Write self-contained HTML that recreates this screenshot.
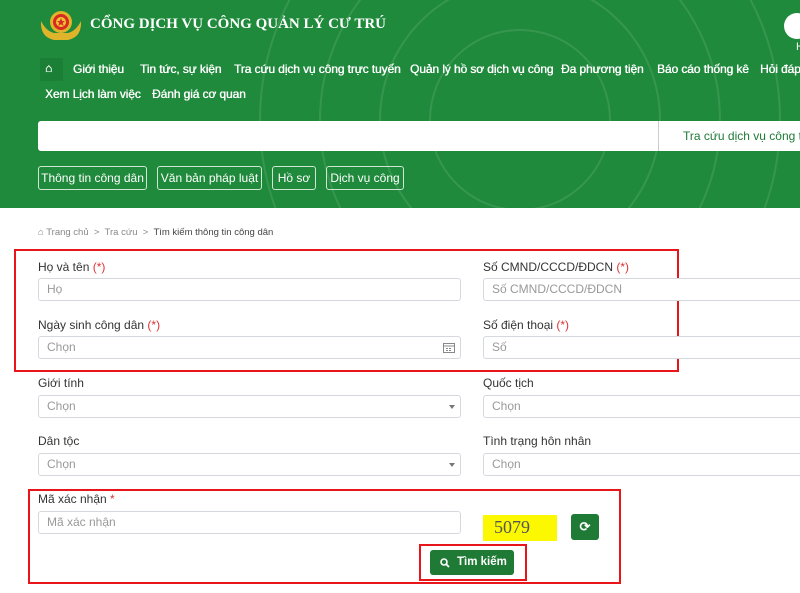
<!DOCTYPE html>
<html><head><meta charset="utf-8"><style>
*{box-sizing:border-box;margin:0;padding:0}
body{width:800px;height:593px;overflow:hidden;background:#fff;font-family:"Liberation Sans",sans-serif;position:relative}
.hdr{position:absolute;left:0;top:0;width:800px;height:208px;background:#1f8a3b;overflow:hidden}
.a{position:absolute;white-space:nowrap}
.nav{color:#fff;font-size:12px;letter-spacing:-0.1px;text-shadow:0 0 0.4px #fff,0.3px 0 0 #fff}
.btn{position:absolute;top:166px;height:24px;border:1px solid #cfe6d3;border-radius:3px;color:#fff;font-size:12px;line-height:22px;text-align:center}
.lbl{font-size:12px;color:#333}
.lbl b{color:#d33;font-weight:normal}
.inp{position:absolute;height:23px;border:1px solid #d5d9de;border-radius:3px;font-size:12px;color:#999;padding-left:8px;line-height:21px;background:#fff}
.caret{position:absolute;right:5px;top:9px;border-left:3px solid transparent;border-right:3px solid transparent;border-top:4px solid #777}
.red{position:absolute;border:2px solid #e8161b}
</style></head><body>
<div class="hdr">
<svg width="800" height="208" style="position:absolute;left:0;top:0;opacity:.1">
<g fill="none" stroke="#fff" stroke-width="2">
<circle cx="520" cy="120" r="140"/><circle cx="520" cy="120" r="200"/><circle cx="520" cy="120" r="260"/><circle cx="520" cy="120" r="90"/>
</g></svg>
<svg class="a" style="left:38px;top:7px" width="46" height="36" viewBox="0 0 46 36">
<path d="M3 14 Q2 30 16 33 L30 33 Q44 30 43 14 Q38 24 30 26 L16 26 Q8 24 3 14Z" fill="#e0b42a"/>
<circle cx="23" cy="15" r="11" fill="#e0b42a"/>
<circle cx="23" cy="15" r="8" fill="#d62b23"/><circle cx="23" cy="15" r="5" fill="#f1c232"/>
<polygon points="23,11 24.2,14 27,14 24.8,15.8 25.6,19 23,17.2 20.4,19 21.2,15.8 19,14 21.8,14" fill="#d62b23"/>
</svg>
<div class="a" style="left:90px;top:16px;color:#fff;font-family:'Liberation Serif',serif;font-weight:bold;font-size:15px">CỔNG DỊCH VỤ CÔNG QUẢN LÝ CƯ TRÚ</div>
<div class="a" style="left:40px;top:58px;width:23px;height:23px;background:rgba(0,0,0,.08)"></div>
<div class="a nav" style="left:45px;top:61px">⌂</div>
<div class="a nav" style="left:73px;top:62px">Giới thiệu</div>
<div class="a nav" style="left:140px;top:62px">Tin tức, sự kiện</div>
<div class="a nav" style="left:234px;top:62px">Tra cứu dịch vụ công trực tuyến</div>
<div class="a nav" style="left:410px;top:62px">Quản lý hồ sơ dịch vụ công</div>
<div class="a nav" style="left:561px;top:62px">Đa phương tiện</div>
<div class="a nav" style="left:657px;top:62px">Báo cáo thống kê</div>
<div class="a nav" style="left:760px;top:62px">Hỏi đáp</div>
<div class="a nav" style="left:45px;top:87px">Xem Lịch làm việc</div>
<div class="a nav" style="left:152px;top:87px">Đánh giá cơ quan</div>
<div class="a" style="left:784px;top:13px;width:26px;height:26px;border-radius:50%;background:#fff"></div>
<div class="a" style="left:796px;top:41px;color:#fff;font-size:11px">H</div>
<div class="a" style="left:38px;top:121px;width:770px;height:30px;background:#fff;border-radius:3px"></div>
<div class="a" style="left:658px;top:121px;width:1px;height:30px;background:#ccc"></div>
<div class="a" style="left:683px;top:129px;color:#1f7a35;font-size:12px">Tra cứu dịch vụ công trực tuyến</div>
<div class="btn" style="left:38px;width:109px">Thông tin công dân</div>
<div class="btn" style="left:157px;width:105px">Văn bản pháp luật</div>
<div class="btn" style="left:272px;width:44px">Hồ sơ</div>
<div class="btn" style="left:326px;width:78px">Dịch vụ công</div>
</div>
<div class="a" style="left:38px;top:227px;font-size:9.5px;color:#888">⌂ Trang chủ &nbsp;&gt;&nbsp; Tra cứu &nbsp;&gt;&nbsp; <span style="color:#444">Tìm kiếm thông tin công dân</span></div>
<div class="red" style="left:14px;top:249px;width:665px;height:123px"></div>
<div class="a lbl" style="left:38px;top:260px">Họ và tên <b>(*)</b></div>
<div class="inp" style="left:38px;top:278px;width:423px">Họ</div>
<div class="a lbl" style="left:483px;top:260px">Số CMND/CCCD/ĐDCN <b>(*)</b></div>
<div class="inp" style="left:483px;top:278px;width:330px">Số CMND/CCCD/ĐDCN</div>
<div class="a lbl" style="left:38px;top:318px">Ngày sinh công dân <b>(*)</b></div>
<div class="inp" style="left:38px;top:336px;width:423px">Chọn<svg style="position:absolute;right:5px;top:5px" width="12" height="11"><rect x=".5" y="1.5" width="11" height="9" fill="none" stroke="#888"/><line x1="1" y1="4" x2="11" y2="4" stroke="#888"/><g fill="#888"><rect x="3" y="6" width="2" height="1"/><rect x="6" y="6" width="2" height="1"/><rect x="3" y="8" width="2" height="1"/><rect x="6" y="8" width="2" height="1"/></g></svg></div>
<div class="a lbl" style="left:483px;top:318px">Số điện thoại <b>(*)</b></div>
<div class="inp" style="left:483px;top:336px;width:330px">Số</div>
<div class="a lbl" style="left:38px;top:376px">Giới tính</div>
<div class="inp" style="left:38px;top:395px;width:423px">Chọn<span class="caret"></span></div>
<div class="a lbl" style="left:483px;top:376px">Quốc tịch</div>
<div class="inp" style="left:483px;top:395px;width:330px">Chọn</div>
<div class="a lbl" style="left:38px;top:434px">Dân tộc</div>
<div class="inp" style="left:38px;top:453px;width:423px">Chọn<span class="caret"></span></div>
<div class="a lbl" style="left:483px;top:434px">Tình trạng hôn nhân</div>
<div class="inp" style="left:483px;top:453px;width:330px">Chọn</div>
<div class="red" style="left:28px;top:489px;width:593px;height:95px"></div>
<div class="a lbl" style="left:38px;top:492px">Mã xác nhận <b style="color:#d33">*</b></div>
<div class="inp" style="left:38px;top:511px;width:423px">Mã xác nhận</div>
<div class="a" style="left:483px;top:515px;width:74px;height:26px;background:#fbf800;color:#555;font-family:'Liberation Serif',serif;font-size:18px;line-height:24px;padding-left:11px">5079</div>
<div class="a" style="left:571px;top:514px;width:28px;height:26px;background:#1f7a35;border-radius:3px;color:#fff;font-size:13px;text-align:center;line-height:25px;font-weight:bold">⟳</div>
<div class="red" style="left:419px;top:544px;width:108px;height:37px"></div>
<div class="a" style="left:430px;top:550px;width:84px;height:25px;background:#1f7a35;border-radius:3px;color:#fff;font-size:11.5px;font-weight:bold;line-height:25px;padding-left:27px"><svg style="position:absolute;left:10px;top:8px" width="10" height="10"><circle cx="4" cy="4" r="3" fill="none" stroke="#fff" stroke-width="1.6"/><line x1="6.2" y1="6.2" x2="9" y2="9" stroke="#fff" stroke-width="1.8"/></svg>Tìm kiếm</div>
</body></html>
